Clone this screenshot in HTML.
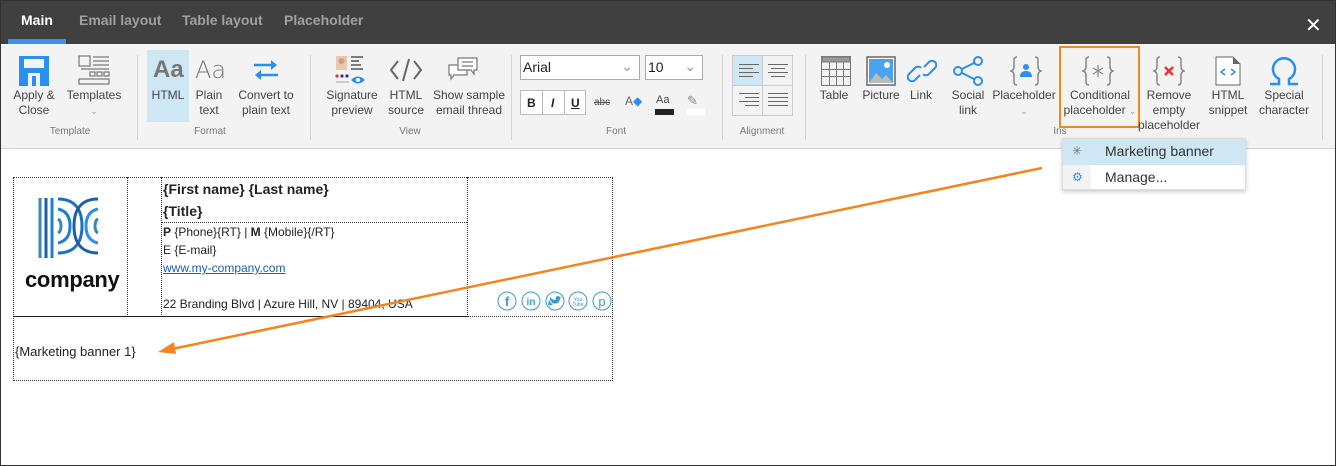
<!DOCTYPE html>
<html><head><meta charset="utf-8"><style>
*{margin:0;padding:0;box-sizing:border-box}
body{width:1336px;height:466px;overflow:hidden;background:#fff;font-family:"Segoe UI","Liberation Sans",sans-serif;position:relative}
.a{position:absolute}
.frame{position:absolute;left:0;top:0;width:1336px;height:466px;border:1px solid #333;z-index:50;pointer-events:none}
.top{left:0;top:0;width:1336px;height:44px;background:#404040}
.tab{top:12px;font-size:14px;font-weight:bold;color:#a0a0a0}
.rib{left:0;top:44px;width:1336px;height:105px;background:#f3f3f3;border-bottom:1px solid #d0d5da}
.lb{font-size:12px;color:#444;text-align:center;line-height:15px;white-space:nowrap}
.gl{font-size:10px;color:#777;text-align:center;top:126px}
.sep{top:55px;width:1px;height:85px;background:#d5d5d5}
.t{font-family:"Liberation Sans",Arial,sans-serif;font-size:12px;color:#222}
</style></head><body>
<div class="a top"></div>
<div class="a tab" style="left:21px;color:#fff">Main</div>
<div class="a tab" style="left:79px">Email layout</div>
<div class="a tab" style="left:182px">Table layout</div>
<div class="a tab" style="left:284px">Placeholder</div>
<div class="a" style="left:8px;top:39px;width:58px;height:5px;background:#3d8fe8"></div>
<div class="a" style="left:1305px;top:13px;color:#fff;font-size:20px;font-weight:bold;font-family:'DejaVu Sans',sans-serif">✕</div>
<div class="a rib"></div>

<svg class="a" style="left:18px;top:55px" width="32" height="32"><path d="M1 1h30v30H1z" fill="#2b8ff0"/><rect x="6" y="4" width="20" height="9" fill="#f3f3f3"/><rect x="10" y="18" width="12" height="13" fill="#f3f3f3"/><rect x="14" y="21" width="4" height="10" fill="#2b8ff0"/></svg>
<div class="a lb" style="left:8px;top:88px;width:52px">Apply &amp;<br>Close</div>
<svg class="a" style="left:78px;top:55px" width="32" height="32" fill="none" stroke="#777" stroke-width="1.2"><rect x="1" y="1" width="11" height="10"/><path d="M15 2h16M15 6h16M15 10h16M3 14h28"/><rect x="12" y="17" width="5" height="4"/><rect x="19" y="17" width="5" height="4"/><rect x="26" y="17" width="5" height="4"/><rect x="1" y="24" width="30" height="5"/></svg>
<div class="a lb" style="left:64px;top:88px;width:60px">Templates<br><span style="font-size:9px;color:#999">⌄</span></div>
<div class="a gl" style="left:20px;width:100px">Template</div>
<div class="a sep" style="left:137px"></div>

<div class="a" style="left:147px;top:50px;width:42px;height:72px;background:#cde8f4"></div>
<div class="a" style="left:153px;top:56px;font-size:24px;font-weight:bold;color:#777;font-family:'Liberation Sans',sans-serif">Aa</div>
<div class="a lb" style="left:147px;top:88px;width:42px">HTML</div>
<div class="a" style="left:195px;top:56px;font-size:24px;color:#777;font-family:'DejaVu Sans',sans-serif;font-weight:200">Aa</div>
<div class="a lb" style="left:190px;top:88px;width:38px">Plain<br>text</div>
<svg class="a" style="left:252px;top:59px" width="28" height="22" stroke="#2b8ff0" stroke-width="2.5" fill="#2b8ff0"><path d="M2 6h18" /><path d="M19 1l6 5-6 5z" stroke="none"/><path d="M8 16h18"/><path d="M9 11l-6 5 6 5z" stroke="none"/></svg>
<div class="a lb" style="left:232px;top:88px;width:68px">Convert to<br>plain text</div>
<div class="a gl" style="left:160px;width:100px">Format</div>
<div class="a sep" style="left:310px"></div>

<svg class="a" style="left:335px;top:55px" width="32" height="32"><rect x="1" y="1" width="11" height="14" fill="#e8c9a8"/><circle cx="6.5" cy="6" r="3" fill="#c99" /><path d="M16 2h12M16 6h8M16 10h10M16 14h12" stroke="#555" stroke-width="1.5"/><circle cx="2" cy="21" r="1.6" fill="#e33"/><circle cx="7" cy="21" r="1.6" fill="#339"/><circle cx="12" cy="21" r="1.6" fill="#339"/><path d="M1 27h13" stroke="#ccc" stroke-width="2"/><path d="M16 25q7-7 14 0q-7 7-14 0z" fill="#2b8ff0"/><circle cx="23" cy="25" r="2" fill="#fff"/></svg>
<div class="a lb" style="left:322px;top:88px;width:60px">Signature<br>preview</div>
<svg class="a" style="left:390px;top:57px" width="32" height="26" fill="none" stroke="#666" stroke-width="2"><path d="M8 4l-7 9 7 9M24 4l7 9-7 9M19 2l-6 22"/></svg>
<div class="a lb" style="left:384px;top:88px;width:44px">HTML<br>source</div>
<svg class="a" style="left:448px;top:56px" width="32" height="26" fill="#fff" stroke="#777" stroke-width="1.2"><path d="M1 9h18v10H6l-3 4v-4H1z"/><path d="M10 2h19v12h-3v4l-3-4H10z"/><path d="M14 6h11M14 10h11"/></svg>
<div class="a lb" style="left:432px;top:88px;width:74px">Show sample<br>email thread</div>
<div class="a gl" style="left:360px;width:100px">View</div>
<div class="a sep" style="left:511px"></div>

<div class="a t" style="left:520px;top:55px;width:120px;height:25px;border:1px solid #aaa;background:#fff;font-size:14px;padding:3px 2px">Arial<span style="position:absolute;right:6px;top:2px;color:#999">⌄</span></div>
<div class="a t" style="left:645px;top:55px;width:58px;height:25px;border:1px solid #aaa;background:#fff;font-size:14px;padding:3px 2px">10<span style="position:absolute;right:6px;top:2px;color:#999">⌄</span></div>
<div class="a" style="left:520px;top:90px;width:66px;height:25px;border:1px solid #bbb;background:#fff"></div>
<div class="a" style="left:542px;top:90px;width:1px;height:25px;background:#bbb"></div>
<div class="a" style="left:564px;top:90px;width:1px;height:25px;background:#bbb"></div>
<div class="a t" style="left:527px;top:96px;font-weight:bold">B</div>
<div class="a t" style="left:551px;top:96px;font-style:italic;font-weight:bold">I</div>
<div class="a t" style="left:571px;top:96px;text-decoration:underline;font-weight:bold">U</div>
<div class="a t" style="left:594px;top:97px;font-size:10px;text-decoration:line-through;color:#555">abc</div>
<div class="a t" style="left:625px;top:94px;font-size:12px;color:#666">A<span style="color:#2b8ff0">◆</span></div>
<div class="a t" style="left:656px;top:94px;font-size:11px;color:#444">Aa</div>
<div class="a" style="left:655px;top:109px;width:19px;height:6px;background:#222"></div>
<div class="a t" style="left:687px;top:93px;color:#888;font-size:13px">✎</div>
<div class="a" style="left:686px;top:109px;width:19px;height:6px;background:#fff"></div>
<div class="a gl" style="left:566px;width:100px">Font</div>
<div class="a sep" style="left:722px"></div>

<div class="a" style="left:732px;top:55px;width:61px;height:61px;border:1px solid #c8ccd0;background:#f3f3f3"></div>
<div class="a" style="left:733px;top:56px;width:29px;height:29px;background:#cde8f4"></div>
<div class="a" style="left:762px;top:56px;width:1px;height:59px;background:#c8ccd0"></div>
<div class="a" style="left:733px;top:85px;width:59px;height:1px;background:#c8ccd0"></div>
<svg class="a" style="left:732px;top:55px" width="62" height="62" stroke="#666" stroke-width="1"><path d="M7 9.5h20M7 13.5h14M7 17.5h20M7 21.5h14"/><path d="M36 9.5h20M39 13.5h14M36 17.5h20M39 21.5h14"/><path d="M7 38.5h20M13 42.5h14M7 46.5h20M13 50.5h14"/><path d="M36 38.5h20M36 42.5h20M36 46.5h20M36 50.5h20"/></svg>
<div class="a gl" style="left:712px;width:100px">Alignment</div>
<div class="a sep" style="left:805px"></div>

<svg class="a" style="left:821px;top:56px" width="30" height="30" fill="none" stroke="#777" stroke-width="1"><rect x="0.5" y="0.5" width="29" height="29"/><rect x="1" y="1" width="28" height="5" fill="#999"/><path d="M1 13.5h28M1 20.5h28M8.5 6v23M15.5 6v23M22.5 6v23"/></svg>
<div class="a lb" style="left:812px;top:88px;width:44px">Table</div>
<svg class="a" style="left:866px;top:56px" width="30" height="30"><rect x="1" y="1" width="28" height="28" fill="#fff" stroke="#666" stroke-width="1.5"/><rect x="3" y="3" width="24" height="24" fill="#4aa3f0"/><circle cx="21" cy="9" r="3" fill="#fff"/><path d="M3 27l7-10 6 6 4-4 7 8z" fill="#bbb"/></svg>
<div class="a lb" style="left:858px;top:88px;width:46px">Picture</div>
<svg class="a" style="left:907px;top:56px" width="30" height="30" fill="none" stroke="#2b8ff0" stroke-width="2"><path d="M13 19l-5 5a4 4 0 0 1-6-6l6-6a4 4 0 0 1 6 0"/><path d="M17 11l5-5a4 4 0 0 1 6 6l-6 6a4 4 0 0 1-6 0"/></svg>
<div class="a lb" style="left:902px;top:88px;width:38px">Link</div>
<svg class="a" style="left:953px;top:56px" width="30" height="30" fill="none" stroke="#2b8ff0" stroke-width="2"><circle cx="5" cy="15" r="4"/><circle cx="25" cy="5" r="4"/><circle cx="25" cy="25" r="4"/><path d="M9 13l12-6M9 17l12 6"/></svg>
<div class="a lb" style="left:946px;top:88px;width:44px">Social<br>link</div>

<!-- brace icons -->
<svg class="a" style="left:1010px;top:55px" width="32" height="32" fill="none" stroke="#888" stroke-width="1.5"><path d="M7 2q-3 0-3 3v7q0 3-3 4q3 1 3 4v7q0 3 3 3M25 2q3 0 3 3v7q0 3 3 4q-3 1-3 4v7q0 3-3 3"/><circle cx="16" cy="12" r="3" fill="#2b8ff0" stroke="none"/><path d="M10 22q0-6 6-6t6 6z" fill="#2b8ff0" stroke="none"/></svg>
<div class="a lb" style="left:992px;top:88px;width:64px">Placeholder<br><span style="font-size:9px;color:#999">⌄</span></div>
<svg class="a" style="left:1082px;top:55px" width="32" height="32" fill="none" stroke="#888" stroke-width="1.5"><path d="M7 2q-3 0-3 3v7q0 3-3 4q3 1 3 4v7q0 3 3 3M25 2q3 0 3 3v7q0 3 3 4q-3 1-3 4v7q0 3-3 3"/><path d="M16 10v12M11 13l10 6M21 13l-10 6" stroke-width="1.2"/></svg>
<div class="a lb" style="left:1060px;top:88px;width:80px">Conditional<br>placeholder <span style="font-size:9px;color:#999">⌄</span></div>
<div class="a" style="left:1059px;top:46px;width:81px;height:82px;border:2px solid #f08a1c"></div>
<svg class="a" style="left:1153px;top:55px" width="32" height="32" fill="none" stroke="#888" stroke-width="1.5"><path d="M7 2q-3 0-3 3v7q0 3-3 4q3 1 3 4v7q0 3 3 3M25 2q3 0 3 3v7q0 3 3 4q-3 1-3 4v7q0 3-3 3"/><path d="M12 12l8 8M20 12l-8 8" stroke="#e33" stroke-width="2.5"/></svg>
<div class="a lb" style="left:1138px;top:88px;width:62px">Remove<br>empty<br>placeholder</div>
<svg class="a" style="left:1215px;top:56px" width="26" height="30"><path d="M1 1h17l7 7v21H1z" fill="#fff" stroke="#666"/><path d="M18 1v7h7z" fill="#666"/><path d="M10 13l-4 3 4 3M16 13l4 3-4 3" fill="none" stroke="#2b8ff0" stroke-width="1.5"/></svg>
<div class="a lb" style="left:1204px;top:88px;width:48px">HTML<br>snippet</div>
<svg class="a" style="left:1268px;top:56px" width="32" height="30" fill="none" stroke="#2b8ff0" stroke-width="2.5"><path d="M2 28h9v-5a11 11 0 1 1 10 0v5h9"/></svg>
<div class="a lb" style="left:1256px;top:88px;width:56px">Special<br>character</div>
<div class="a gl" style="left:1040px;width:40px">Ins</div>
<div class="a sep" style="left:1322px"></div>

<div class="a" style="left:1062px;top:138px;width:184px;height:52px;background:#fff;border:1px solid #ddd;box-shadow:0 2px 4px rgba(0,0,0,.2);z-index:5">
<div style="position:absolute;left:0;top:0;width:182px;height:26px;background:#cde8f4"></div>
<div style="position:absolute;left:0;top:26px;width:28px;height:24px;background:#f3f3f3"></div>
<div style="position:absolute;left:9px;top:5px;font-size:12px;color:#777">✳</div>
<div style="position:absolute;left:9px;top:31px;font-size:12px;color:#2b8ff0">⚙</div>
<div style="position:absolute;left:42px;top:4px;font-size:14px;color:#333">Marketing banner</div>
<div style="position:absolute;left:42px;top:30px;font-size:14px;color:#333">Manage...</div>
</div>

<div class="a" style="left:13px;top:177px;width:600px;height:204px;border:1px dotted #333"></div>
<div class="a" style="left:127px;top:177px;height:140px;border-left:1px dotted #333"></div>
<div class="a" style="left:161px;top:177px;height:140px;border-left:1px dotted #333"></div>
<div class="a" style="left:467px;top:177px;height:140px;border-left:1px dotted #333"></div>
<div class="a" style="left:161px;top:222px;width:306px;border-top:1px dotted #333"></div>
<div class="a" style="left:13px;top:316px;width:454px;border-top:1px solid #222"></div>
<div class="a" style="left:467px;top:316px;width:146px;border-top:1px dotted #333"></div>
<svg class="a" style="left:30px;top:190px" width="90" height="72" fill="none" stroke-width="3"><path d="M10 8v60" stroke="#3a8aad"/><path d="M16 8v60" stroke="#1c5fa8"/><path d="M22 8v60" stroke="#1c7fd0"/>
<path d="M30 8q44 0 44 30t44 30" stroke="none"/>
<path d="M28 9c18 0 24 12 24 27s-6 27-24 27" stroke="#1c6fc0"/>
<path d="M28 19c9 2 12 9 12 17s-3 15-12 17" stroke="#1c7fd0"/>
<path d="M28 29c4 2 4 12 0 14" stroke="#3a8aad"/>
<path d="M68 9c-18 0-24 12-24 27s6 27 24 27" stroke="#1c5fa8"/>
<path d="M68 19c-9 2-12 9-12 17s3 15 12 17" stroke="#2b8ff0"/>
<path d="M68 29c-4 2-4 12 0 14" stroke="#3a8aad"/></svg>
<div class="a" style="left:25px;top:267px;font-family:'Liberation Sans',sans-serif;font-weight:bold;font-size:22px;color:#111;letter-spacing:-0.3px">company</div>
<div class="a t" style="left:163px;top:181px;font-size:14px;font-weight:bold">{First name} {Last name}</div>
<div class="a t" style="left:163px;top:203px;font-size:14px;font-weight:bold">{Title}</div>
<div class="a t" style="left:163px;top:225px"><b>P</b> {Phone}{RT} | <b>M</b> {Mobile}{/RT}</div>
<div class="a t" style="left:163px;top:243px">E {E-mail}</div>
<div class="a t" style="left:163px;top:261px;color:#1a5fb4;text-decoration:underline">www.my-company.com</div>
<div class="a t" style="left:163px;top:297px">22 Branding Blvd | Azure Hill, NV | 89404, USA</div>
<svg class="a" style="left:496px;top:291px" width="118" height="20" fill="none" stroke="#3a9ad9" stroke-width="1"><circle cx="11" cy="10" r="9"/><circle cx="35" cy="10" r="9"/><circle cx="59" cy="10" r="9"/><circle cx="82" cy="10" r="9"/><circle cx="106" cy="10" r="9"/>
<text x="11" y="15" fill="#3a9ad9" stroke="none" font-size="13" font-weight="bold" text-anchor="middle" font-family="Liberation Sans">f</text>
<text x="35" y="14" fill="#3a9ad9" stroke="none" font-size="10" font-weight="bold" text-anchor="middle" font-family="Liberation Sans">in</text>
<path d="M53 7q3 5 9 3q2-2 2-5l2-1-2 0q-2-2-4 0q-1 2 0 3q-4 0-6-3q-1 3 2 5l-2 0q1 2 3 2q-2 2-5 1" fill="#3a9ad9" stroke="none" transform="translate(0,2)"/>
<text x="82" y="10" fill="#3a9ad9" stroke="none" font-size="5" text-anchor="middle" font-family="Liberation Sans">You</text><text x="82" y="15" fill="#3a9ad9" stroke="none" font-size="5" text-anchor="middle" font-family="Liberation Sans">Tube</text>
<text x="106" y="15" fill="#3a9ad9" stroke="none" font-size="13" text-anchor="middle" font-family="Liberation Sans">p</text></svg>
<div class="a t" style="left:15px;top:344px;font-size:13px">{Marketing banner 1}</div>

<svg class="a" style="left:0;top:0;z-index:10" width="1336" height="466"><path d="M1042 168L172 349" stroke="#f5841f" stroke-width="2.5"/><path d="M158 352l16-10 2 12z" fill="#f5841f"/></svg>
<div class="frame"></div>
</body></html>
